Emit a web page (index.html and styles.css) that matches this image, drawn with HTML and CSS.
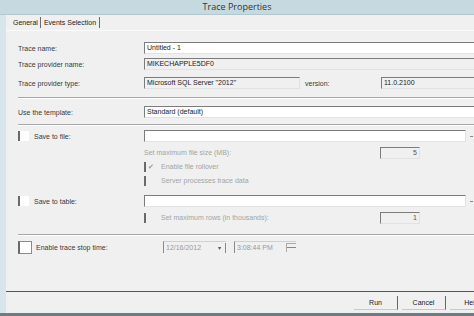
FILE: index.html
```html
<!DOCTYPE html>
<html lang="en">
<head>
  <meta charset="UTF-8">
  <title>Trace Properties</title>
  <link rel="stylesheet" href="styles.css">
</head>
<body>
  <div class="titlebar">Trace Properties</div>
  <div class="window">
    <div class="frame-left"></div>
    <div class="main">
      <div class="tabs">
        <span class="tab active">General</span>
        <span class="tab">Events Selection</span>
      </div>

      <div class="form">
        <div class="row r-name">
          <span class="label">Trace name:</span>
          <div class="input white wide">Untitled - 1</div>
        </div>
        <div class="row r-prov">
          <span class="label">Trace provider name:</span>
          <div class="input wide">MIKECHAPPLE5DF0</div>
        </div>
        <div class="row r-type">
          <span class="label">Trace provider type:</span>
          <div class="input type">Microsoft SQL Server "2012"</div>
          <span class="label version">version:</span>
          <div class="input wide">11.0.2100</div>
        </div>

        <div class="sep s1"></div>

        <div class="row r-tpl">
          <span class="label">Use the template:</span>
          <div class="input white wide">Standard (default)</div>
        </div>

        <div class="sep s2"></div>

        <div class="row r-file">
          <span class="label"><span class="check"></span>Save to file:</span>
          <div class="input white path"></div>
          <span class="browse"></span>
        </div>
        <div class="row sub r-size">
          <span class="dim grow">Set maximum file size (MB):</span>
          <div class="input num">5</div>
        </div>
        <div class="row sub r-roll">
          <span class="check small on">&#10004;</span>
          <span class="dim">Enable file rollover</span>
        </div>
        <div class="row sub r-srv">
          <span class="check small"></span>
          <span class="dim">Server processes trace data</span>
        </div>

        <div class="row r-table">
          <span class="label"><span class="check"></span>Save to table:</span>
          <div class="input white path"></div>
          <span class="browse"></span>
        </div>
        <div class="row sub r-rows">
          <span class="check small"></span>
          <span class="dim grow short">Set maximum rows (in thousands):</span>
          <div class="input num">1</div>
        </div>

        <div class="sep s3"></div>

        <div class="row r-stop">
          <span class="label stop"><span class="check big"></span>Enable trace stop time:</span>
          <div class="picker date">12/16/2012<span class="drop">&#9662;</span></div>
          <div class="picker time">3:08:44 PM<span class="spin"></span></div>
        </div>
      </div>

      <div class="buttons">
        <button class="btn">Run</button>
        <button class="btn">Cancel</button>
        <button class="btn">Help</button>
      </div>
    </div>
  </div>
  <div class="taskbar"></div>
</body>
</html>
```

FILE: styles.css
```css
html, body {
  margin: 0;
  padding: 0;
}

body {
  width: 474px;
  height: 316px;
  overflow: hidden;
  display: flex;
  flex-direction: column;
  background: #f0f0f0;
  font-family: "Liberation Sans", Arial, sans-serif;
  font-size: 7px;
  color: #3a3a3a;
}

.titlebar {
  height: 14px;
  line-height: 14px;
  background: #c5dae0;
  border-bottom: 1px solid #b3c8ce;
  text-align: center;
  font-family: "Open Sans", sans-serif;
  font-size: 9px;
  color: #333;
  white-space: nowrap;
}

.window {
  flex: 1;
  display: flex;
  min-height: 0;
}

.frame-left {
  width: 6px;
  background: #d6e6eb;
}

.main {
  flex: 1;
  display: flex;
  flex-direction: column;
  min-width: 0;
}

/* tabs */
.tabs {
  height: 15px;
  display: flex;
  align-items: center;
  padding-left: 4px;
  border-bottom: 1px solid #fbfbfb;
}

.tab {
  padding: 0 3px;
  height: 11px;
  line-height: 11px;
  border-right: 1px solid #6a6a6a;
  white-space: nowrap;
  color: #222;
}

.tab.active {
  padding-right: 2px;
}

/* form */
.form {
  flex: 1;
  padding-left: 12px;
  display: flex;
  flex-direction: column;
}

.row {
  display: flex;
  align-items: center;
  height: 12px;
  white-space: nowrap;
}

.row.sub {
  height: 11px;
  padding-left: 126px;
}

.label {
  width: 126px;
  flex: none;
  display: flex;
  align-items: center;
}

.label.version {
  width: 76px;
  padding-left: 5px;
}

.input {
  height: 10px;
  line-height: 10px;
  padding-left: 2px;
  border-top: 1px solid #7c7c7c;
  border-left: 1px solid #7c7c7c;
  border-bottom: 1px solid #e2e2e2;
  border-right: 1px solid #e2e2e2;
  background: #f0f0f0;
  color: #222;
  overflow: hidden;
}

.input.white { background: #fff; }
.input.wide { flex: 1; border-right: none; }
.input.type { width: 152px; }
.input.path { width: 318px; }

.input.num {
  width: 36px;
  padding: 0 2px 0 0;
  text-align: right;
  color: #555;
}

.browse {
  margin-left: 4px;
  width: 3px;
  border-top: 1px solid #888;
}

.dim { color: #a4a4a4; }
.grow { width: 236px; flex: none; }
.grow.short { width: 219px; }

.r-name { margin-top: 11px; }
.r-prov { margin-top: 4px; }
.r-type { margin-top: 7px; }
.r-tpl { margin-top: 7px; }
.r-file { margin-top: 4px; }
.r-size { margin-top: 5px; }
.r-roll { margin-top: 3px; }
.r-srv { margin-top: 3px; }
.r-table { margin-top: 9px; }
.r-rows { margin-top: 5px; }
.r-stop { margin-top: 5px; }

.sep {
  height: 1px;
  background: #a8a8a8;
  border-bottom: 1px solid #fff;
}

.s1 { margin-top: 8px; }
.s2 { margin-top: 6px; }
.s3 { margin-top: 11px; }

/* checkboxes */
.check {
  width: 9px;
  height: 10px;
  margin-right: 5px;
  border-left: 2px solid #6a6a6a;
  background: #fff;
  flex: none;
}

.check.small {
  width: 9px;
  height: 10px;
  margin-right: 6px;
  border-left-width: 2px;
  background: transparent;
  color: #999;
  font-size: 7px;
  line-height: 10px;
  text-align: center;
}

.check.big {
  width: 11px;
  height: 11px;
  border: 1px solid #8a8a8a;
  border-left: 2px solid #6a6a6a;
  margin-right: 4px;
}

.label.stop { width: 145px; }

/* date / time */
.picker {
  height: 11px;
  line-height: 11px;
  padding-left: 2px;
  border-left: 1px solid #8a8a8a;
  border-top: 1px solid #d0d0d0;
  color: #999;
  display: flex;
  justify-content: space-between;
  align-items: center;
}

.picker.date { width: 60px; margin-right: 8px; }
.picker.time { width: 59px; }

.drop {
  width: 7px;
  height: 10px;
  border-right: 1px solid #8a8a8a;
  font-size: 6px;
  color: #555;
  line-height: 10px;
}

.spin {
  width: 9px;
  height: 8px;
  border-left: 1px solid #aaa;
  border-top: 1px solid #aaa;
  background: linear-gradient(#f0f0f0 3px, #888 3px, #888 4px, #f0f0f0 4px);
}

/* buttons */
.buttons {
  height: 21px;
  border-top: 1px solid #555;
  display: flex;
  align-items: center;
  justify-content: flex-start;
  padding-left: 348px;
  gap: 4px;
}

.btn {
  width: 44px;
  height: 14px;
  padding: 0;
  margin: 0;
  background: #f0f0f0;
  border: none;
  border-right: 1px solid #666;
  border-bottom: 1px solid #c8c8c8;
  font-family: "Liberation Sans", Arial, sans-serif;
  font-size: 7px;
  color: #222;
  flex: none;
}

.taskbar {
  height: 3px;
  background: #6f7b83;
}
```
